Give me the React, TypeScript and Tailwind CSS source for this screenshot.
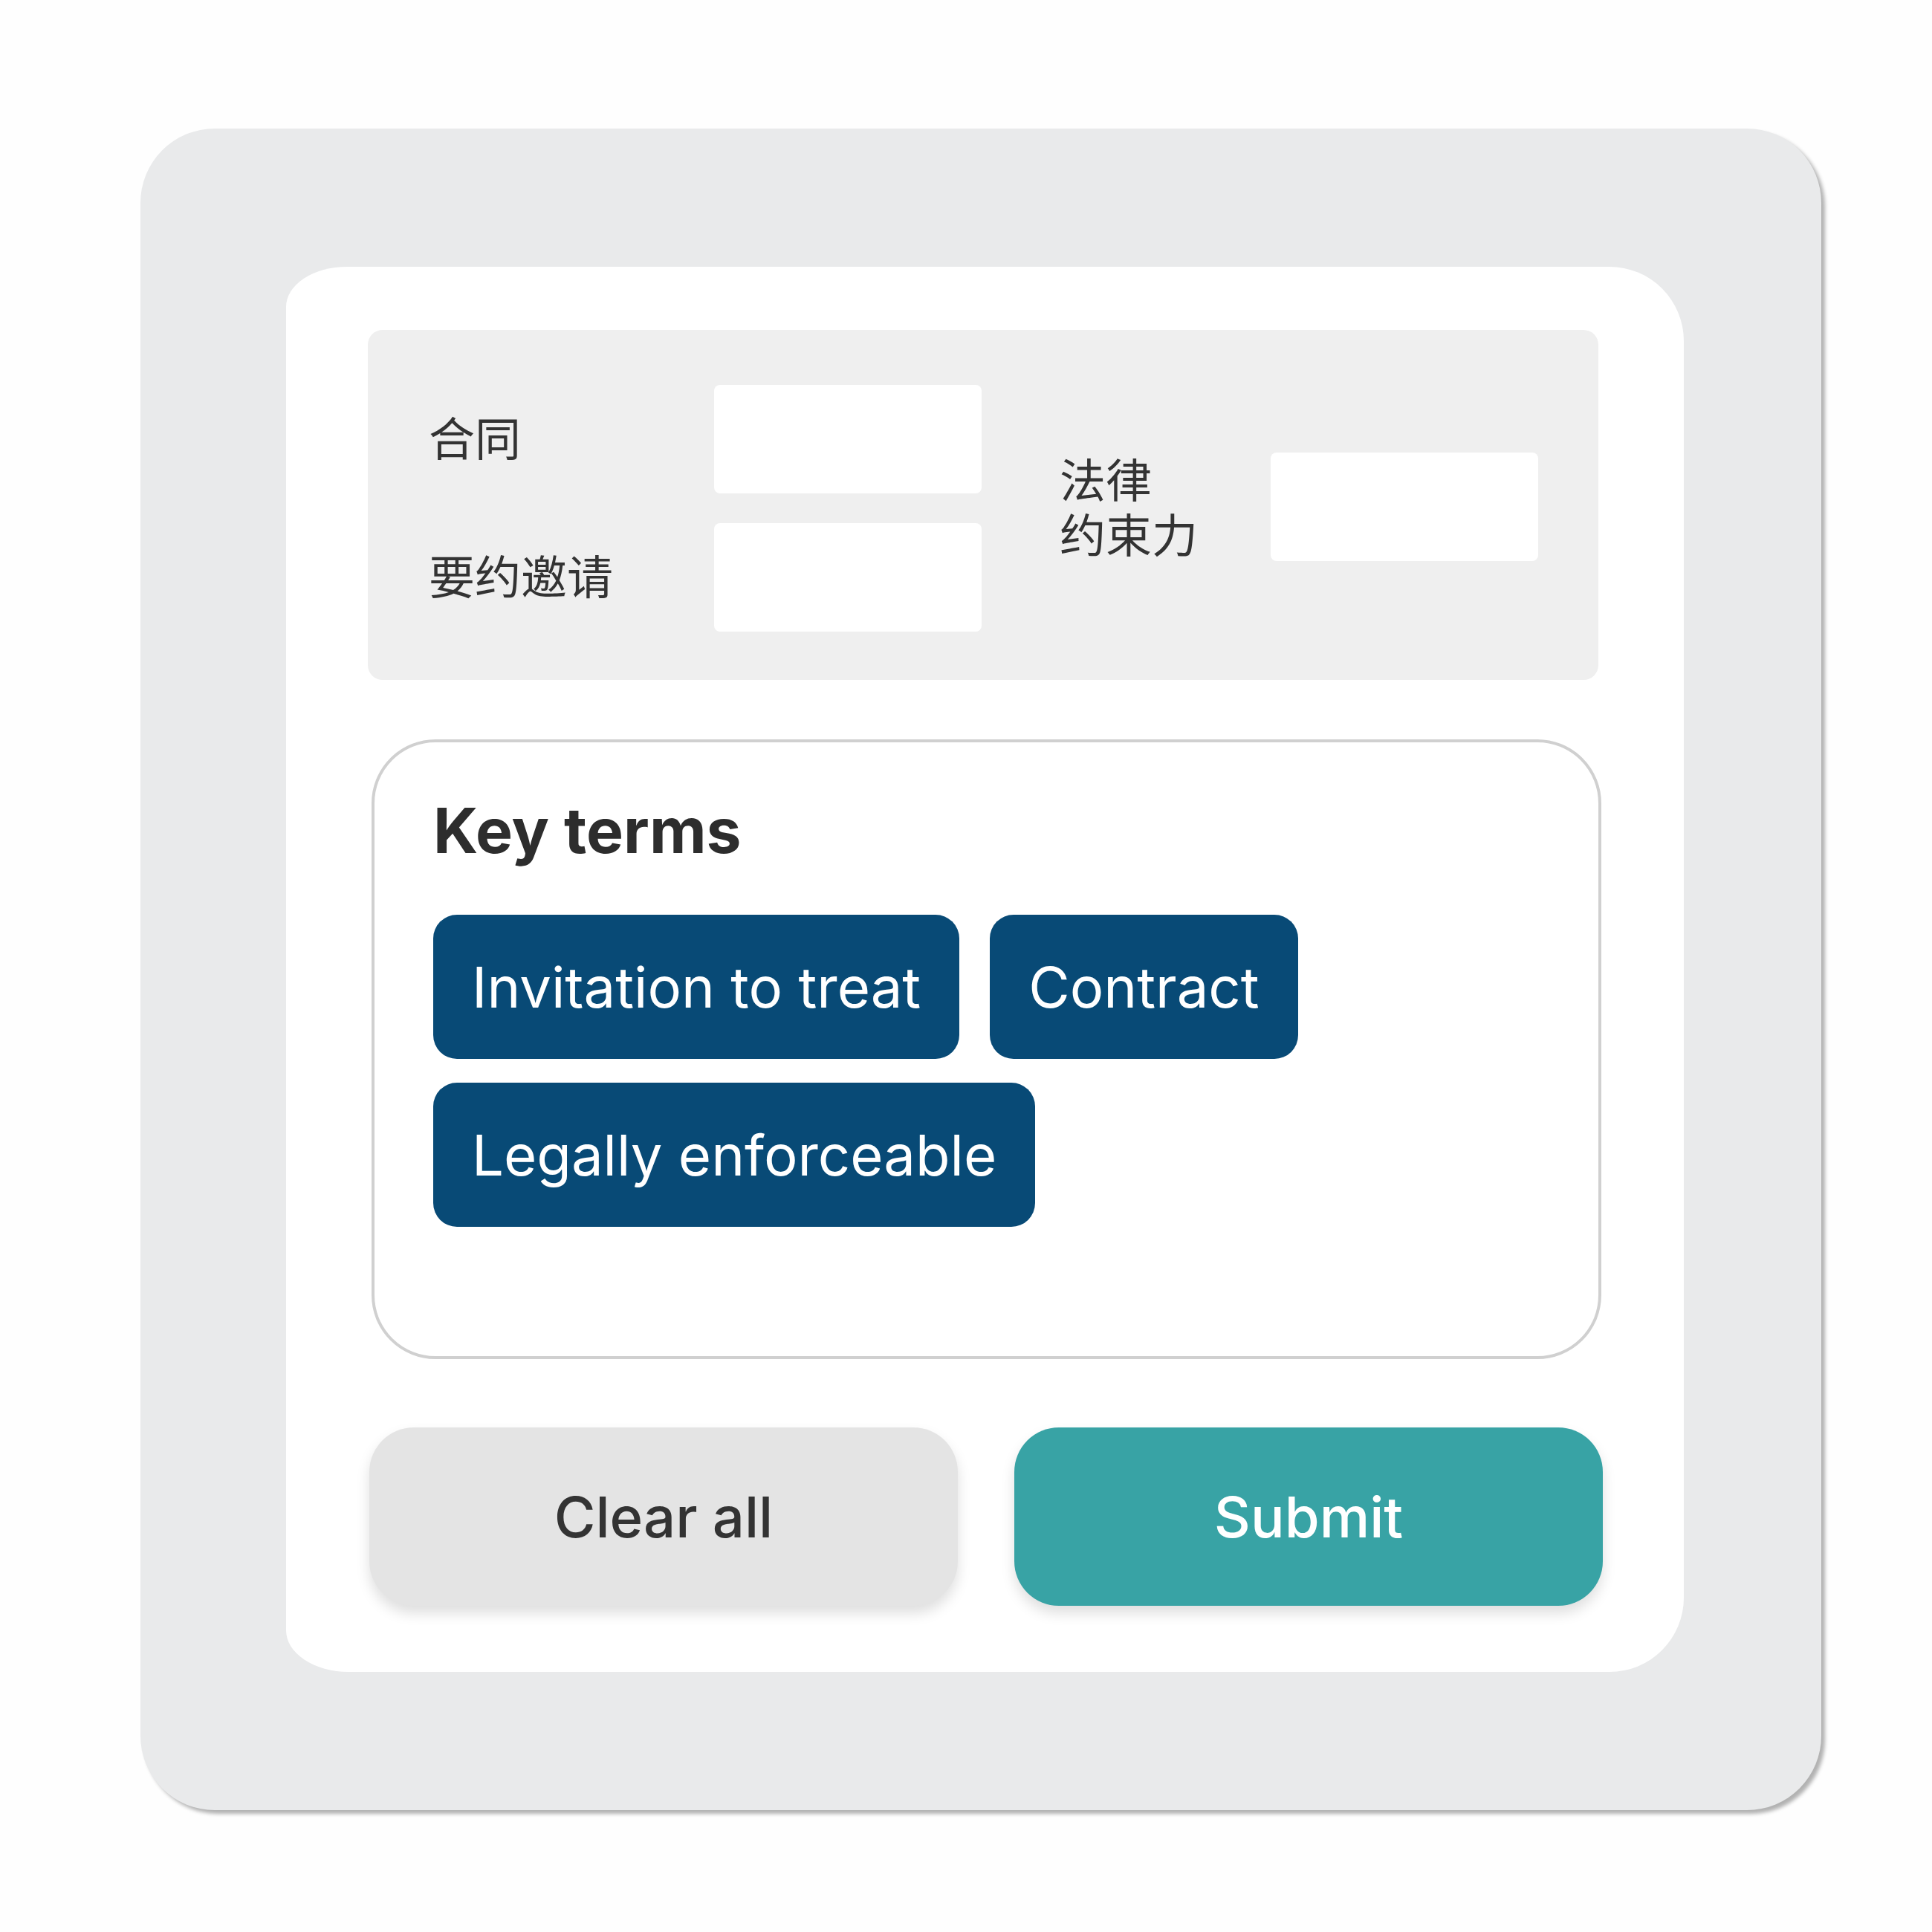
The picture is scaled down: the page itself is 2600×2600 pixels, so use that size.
import { useState } from "react";

const cjk = "font-['Noto_Sans_CJK_SC','Noto_Sans',sans-serif]";
const latin = "font-['Inter','Liberation_Sans',sans-serif]";

const terms = ["Invitation to treat", "Contract", "Legally enforceable"];

function Field({ value, onChange }: { value: string; onChange: (v: string) => void }) {
    return (
        <input
            value={value}
            onChange={(e) => onChange(e.target.value)}
            className="w-[360px] h-[146px] rounded-[8px] bg-white outline-none px-6 text-[48px] text-[#333]"
        />
    );
}

export default function App() {
    const [contract, setContract] = useState("");
    const [invitation, setInvitation] = useState("");
    const [binding, setBinding] = useState("");

    const clearAll = () => {
        setContract("");
        setInvitation("");
        setBinding("");
    };

    return (
        <div className="w-[2600px] h-[2600px] bg-[#fefefe] pt-[173px] pl-[189px]">
            <div className="w-[2262px] h-[2263px] bg-[#e9eaeb] rounded-[100px] pl-[196px] pr-[185px] pt-[186px] shadow-[5px_5px_5px_rgba(0,0,0,0.3)]">
                <div className="w-[1881px] h-[1891px] bg-white rounded-tl-[82px_54px] rounded-bl-[84px_56px] rounded-r-[100px] px-[110px] pt-[85px]">
                    {/* form */}
                    <div className={`w-[1656px] h-[471px] bg-[#efefef] rounded-[20px] pl-[82px] pt-[9px] flex items-center ${cjk} text-[62px] text-[#333] leading-none`}>
                        <div className="grid grid-cols-[384px_360px] gap-y-[40px] items-center">
                            <div className="mb-[8px]">合同</div>
                            <Field value={contract} onChange={setContract} />
                            <div className="mb-[8px]">要约邀请</div>
                            <Field value={invitation} onChange={setInvitation} />
                        </div>
                        <div className="ml-[105px] flex items-center -mt-[4px]">
                            <div className="w-[284px] flex flex-col gap-[12px] mb-[4px]">
                                <span>法律</span>
                                <span>约束力</span>
                            </div>
                            <Field value={binding} onChange={setBinding} />
                        </div>
                    </div>

                    {/* key terms */}
                    <div className={`mt-[80px] ml-[5px] w-[1655px] h-[834px] border-[4px] border-[#d0d0d0] rounded-[86px] pl-[79px] pr-[60px] pt-[77px] ${latin}`}>
                        <div className="text-[84px] font-bold leading-none text-[#2d2d2d]">Key terms</div>
                        <div className="mt-[71px] flex flex-wrap gap-x-[41px] gap-y-[32px]">
                            {terms.map((t) => (
                                <div
                                    key={t}
                                    className="h-[194px] px-[52px] flex items-center rounded-[32px] bg-[#084a76] text-white text-[76px] leading-none"
                                >
                                    {t}
                                </div>
                            ))}
                        </div>
                    </div>

                    {/* actions */}
                    <div className={`mt-[92px] ml-[2px] grid grid-cols-2 gap-[76px] w-[1660px] ${latin}`}>
                        <button
                            onClick={clearAll}
                            className="h-[240px] rounded-[60px] bg-[#e4e4e4] text-[#333] text-[76px] font-medium shadow-[0_10px_18px_rgba(0,0,0,0.13)]"
                        >
                            Clear all
                        </button>
                        <button className="h-[240px] rounded-[60px] bg-[#38a3a5] text-white text-[76px] font-medium shadow-[0_10px_18px_rgba(0,0,0,0.13)]">
                            Submit
                        </button>
                    </div>
                </div>
            </div>
        </div>
    );
}
